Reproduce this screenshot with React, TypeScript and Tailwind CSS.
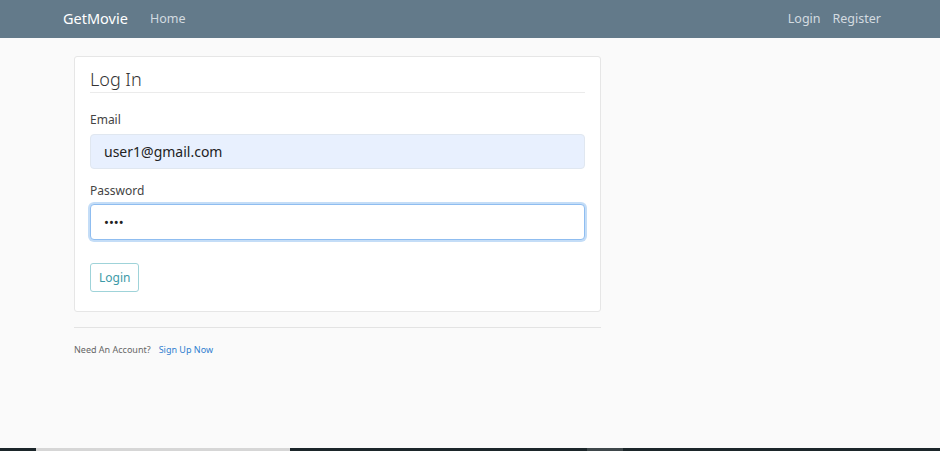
import { useState } from 'react';

export default function App() {
  const [email, setEmail] = useState('user1@gmail.com');
  const [password, setPassword] = useState('1234');

  return (
    <div
      className="relative h-[451px] w-[940px] overflow-hidden bg-[#fafafa] text-[#333]"
      style={{ fontFamily: '"Noto Sans", "Open Sans", sans-serif' }}
    >
      {/* navbar */}
      <nav className="flex h-[38px] items-center bg-[#637a8a] pl-[63px] pr-[59px] text-[12.5px]">
        <span className="text-[14.5px] text-white">GetMovie</span>
        <span className="ml-[22px] text-[#d3dbe0]">Home</span>
        <div className="ml-auto flex gap-[12px] text-[#d3dbe0]">
          <span>Login</span>
          <span>Register</span>
        </div>
      </nav>

      <div className="ml-[74px] mt-[18px] w-[527px]">
        {/* card */}
        <div className="rounded-[3px] border border-[#e6e6e6] bg-white px-[15px] pb-[19px] pt-[10px]">
          <h2 className="border-b border-[#ebebeb] pb-[1px] text-[18px] font-light leading-[24px] text-[#333]">Log In</h2>

          <label className="mt-[19px] block text-[12px] leading-[16px] text-[#444]">Email</label>
          <input
            value={email}
            onChange={e => setEmail(e.target.value)}
            className="mt-[6px] block h-[35px] w-full rounded-[4px] border border-[#e0e7f0] bg-[#e8f0fe] px-[13px] text-[14px] text-[#222] outline-none"
          />

          <label className="mt-[14px] block text-[12px] leading-[16px] text-[#444]">Password</label>
          <input
            type="password"
            autoFocus
            value={password}
            onChange={e => setPassword(e.target.value)}
            className="mt-[5px] block h-[36px] w-full rounded-[4px] border border-[#8fbdf0] bg-white px-[13px] text-[13px] text-[#222] shadow-[0_0_0_2px_#c4ddf7] outline-none"
          />

          <button className="mt-[23px] h-[29px] rounded-[3px] border border-[#9fd3d9] bg-white px-[8px] text-[12px] text-[#3d9aa8]">
            Login
          </button>
        </div>

        <hr className="mt-[15px] border-t border-[#e3e3e3]" />

        <div className="mt-[15px] text-[9px] text-[#666]">
          Need An Account?
          <span className="ml-[8px] text-[#2f7fd0]">Sign Up Now</span>
        </div>
      </div>

      {/* taskbar strip at bottom */}
      <div className="absolute bottom-0 left-0 flex h-[3px] w-full bg-[#1c262a]">
        <div className="ml-[36px] w-[254px] bg-[#d6d6d6]" />
        <div className="ml-[297px] w-[36px] bg-[#3f484b]" />
      </div>
    </div>
  );
}
